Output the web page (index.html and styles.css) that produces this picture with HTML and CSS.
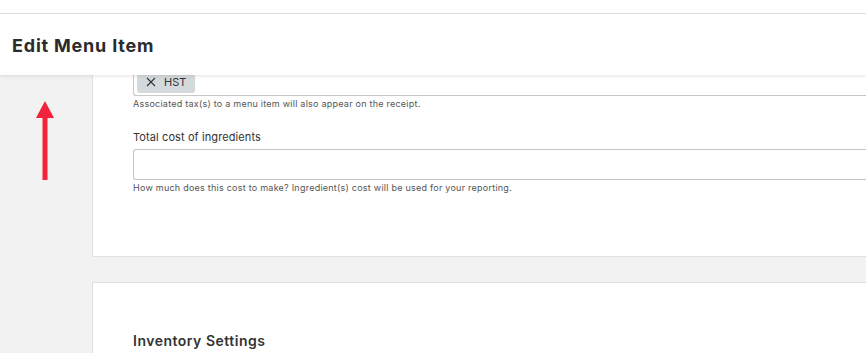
FILE: index.html
```html
<!DOCTYPE html>
<html lang="en">
<head>
    <meta charset="UTF-8">
    <meta name="viewport" content="width=device-width, initial-scale=1.0">
    <title>Edit Menu Item</title>
    <link rel="stylesheet" href="styles.css">
</head>
<body>
    <div class="topbar"></div>
    <header class="header">
        <h1>Edit Menu Item</h1>
    </header>

    <main class="content">
        <section class="card card-first">
            <div class="tag-input">
                <span class="tag">
                    <svg class="tag-remove" width="10" height="10" viewBox="0 0 10 10">
                        <path d="M1 1 L9 9 M9 1 L1 9" stroke="#333" stroke-width="1.1" fill="none"/>
                    </svg>
                    HST
                </span>
            </div>
            <p class="hint">Associated tax(s) to a menu item will also appear on the receipt.</p>

            <label class="field-label" for="cost">Total cost of ingredients</label>
            <input type="text" id="cost" class="input-field">
            <p class="hint">How much does this cost to make? Ingredient(s) cost will be used for your reporting.</p>
        </section>

        <section class="card card-second">
            <h2>Inventory Settings</h2>
        </section>
    </main>

    <!-- annotation arrow -->
    <svg class="arrow" width="20" height="80" viewBox="0 0 20 80">
        <polygon points="10,0 19,17 1,17" fill="#f2233a"/>
        <rect x="7.5" y="15" width="5" height="64" fill="#f2233a"/>
    </svg>
</body>
</html>
```

FILE: styles.css
```css
body {
    margin: 0;
    font-family: 'Inter', 'Liberation Sans', sans-serif;
    background: #f2f2f2;
    color: #333;
    height: 353px;
    overflow: hidden;
    position: relative;
}

.topbar {
    height: 13px;
    background: #fff;
    border-bottom: 1px solid #dedede;
}

.header {
    position: relative;
    z-index: 2;
    height: 61px;
    background: #fff;
    box-shadow: 0 2px 3px rgba(0, 0, 0, 0.08);
    display: flex;
    align-items: center;
    padding-left: 12px;
}

.header h1 {
    margin: 0;
    font-size: 18px;
    font-weight: 700;
    color: #2b2b2b;
    letter-spacing: 0.8px;
    padding-top: 1px;
}

.content {
    margin-top: -29px;
    padding-left: 92px;
}

.card {
    background: #fff;
    border: 1px solid #e1e1e1;
    border-right: none;
    padding-left: 40px;
}

.card-first {
    padding-top: 20px;
    height: 189px;
}

.card-second {
    margin-top: 25px;
    padding-top: 49px;
    height: 60px;
}

.tag-input {
    height: 29px;
    border: 1px solid #c8c8c8;
    border-right: none;
    border-radius: 3px 0 0 3px;
    padding: 3px;
    box-sizing: border-box;
}

.tag {
    display: inline-flex;
    align-items: center;
    gap: 8px;
    height: 22px;
    padding: 0 9px 0 9px;
    background: #d4dadc;
    border-radius: 3px;
    font-size: 11px;
    color: #333;
}

.hint {
    margin: 2px 0 0;
    font-size: 9px;
    letter-spacing: 0.24px;
    color: #555;
}

.field-label {
    display: block;
    margin-top: 21px;
    font-size: 11px;
    letter-spacing: 0.1px;
    color: #333;
}

.input-field {
    display: block;
    margin-top: 5px;
    width: 100%;
    height: 31px;
    box-sizing: border-box;
    border: 1px solid #c4c4c4;
    border-right: none;
    border-radius: 3px 0 0 3px;
    outline: none;
}

.card-second h2 {
    margin: 0;
    font-size: 14px;
    font-weight: 600;
    letter-spacing: 0.5px;
    color: #333;
}

.arrow {
    position: absolute;
    left: 35px;
    top: 101px;
}
```
